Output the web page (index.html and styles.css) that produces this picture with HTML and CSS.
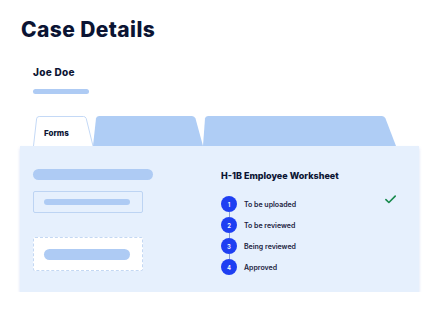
FILE: index.html
```html
<!DOCTYPE html>
<html lang="en">
<head>
<meta charset="utf-8">
<title>Case Details</title>
<link rel="stylesheet" href="styles.css">
</head>
<body>
<div class="page">
  <h1 class="title">Case Details</h1>
  <div class="person">
    <div class="name">Joe Doe</div>
    <div class="skel skel-name"></div>
  </div>
  <div class="tabs">
    <div class="tab tab-forms">
      <svg class="tab-bg" width="60" height="30" viewBox="0 0 60 30"><path d="M0.5 30 L3.6 2.8 Q3.9 0.5 6.2 0.5 L50.5 0.5 Q52.4 0.5 53.2 2.4 L60 30" fill="#ffffff" stroke="#c4d9f6" stroke-width="1"/></svg>
      <span class="tab-label">Forms</span>
    </div>
    <div class="tab tab-2">
      <svg class="tab-bg" width="110" height="30" viewBox="0 0 110 30"><path d="M0 30 L3 2.5 Q3.3 0 6 0 L99 0 Q101.5 0 102.5 2.5 L110 30 Z" fill="#afcdf5"/></svg>
    </div>
    <div class="tab tab-3">
      <svg class="tab-bg" width="193" height="30" viewBox="0 0 193 30"><path d="M0 30 L2 2.5 Q2.3 0 5 0 L179 0 Q181.5 0 182.5 2.5 L193 30 Z" fill="#afcdf5"/></svg>
    </div>
  </div>
  <div class="panel">
    <div class="col-left">
      <div class="skel skel-wide"></div>
      <div class="box box-solid"><div class="skel skel-thin"></div></div>
      <div class="box box-dashed"><div class="skel skel-thick"></div></div>
    </div>
    <div class="col-right">
      <div class="ws-title">H-1B Employee Worksheet</div>
      <div class="steps">
        <div class="step">
          <span class="num">1</span><span class="label">To be uploaded</span>
          <svg class="check" width="11" height="9" viewBox="0 0 11 9"><polyline points="0.9,4.6 3.9,7.5 10.2,1.1" fill="none" stroke="#17894c" stroke-width="1.6" stroke-linecap="round" stroke-linejoin="round"/></svg>
        </div>
        <div class="step"><span class="num">2</span><span class="label">To be reviewed</span></div>
        <div class="step"><span class="num">3</span><span class="label">Being reviewed</span></div>
        <div class="step"><span class="num">4</span><span class="label">Approved</span></div>
      </div>
    </div>
  </div>
</div>
</body>
</html>
```
FILE: styles.css
```css
body {
  margin: 0;
  background: #ffffff;
  font-family: Inter, "Noto Sans", sans-serif;
  color: #0b1433;
}
.page {
  padding: 18px 14px 0 20px;
}
.title {
  margin: 0 0 0 1px;
  font-size: 21px;
  line-height: 24px;
  font-weight: 800;
  letter-spacing: 0.4px;
  color: #0b1433;
}
.person {
  margin-top: 24px;
  padding-left: 13px;
}
.name {
  font-size: 10px;
  line-height: 12px;
  font-weight: 800;
  letter-spacing: 0.3px;
}
.skel {
  background: #aecbf4;
  border-radius: 6px;
}
.skel-name {
  width: 56px;
  height: 5px;
  margin-top: 11px;
}
.tabs {
  display: flex;
  height: 30px;
  margin-top: 22px;
  padding-left: 13px;
}
.tab {
  position: relative;
  height: 30px;
  flex: none;
}
.tab-bg {
  position: absolute;
  left: 0;
  top: 0;
}
.tab-forms { width: 60px; }
.tab-2 { width: 110px; }
.tab-3 { width: 193px; }
.tab-label {
  position: relative;
  display: block;
  padding: 12px 0 0 11px;
  font-size: 8px;
  line-height: 10px;
  font-weight: 800;
  color: #0b1433;
}
.panel {
  display: flex;
  width: 399px;
  height: 146px;
  box-sizing: border-box;
  padding: 23px 0 0 13px;
  background: #e6f0fd;
  box-shadow: 0 2px 3px rgba(110, 145, 225, 0.28);
}
.col-left {
  width: 188px;
  flex: none;
  display: flex;
  flex-direction: column;
}
.skel-wide {
  width: 120px;
  height: 11px;
}
.box {
  width: 110px;
  box-sizing: border-box;
  padding-left: 10px;
  border-radius: 2px;
}
.box-solid {
  height: 22px;
  margin-top: 11px;
  padding-top: 7px;
  border: 1px solid #bdd4f3;
}
.box-dashed {
  height: 34px;
  margin-top: 24px;
  padding-top: 11px;
  border: 1px dashed #c4d8f3;
  background: #ffffff;
}
.skel-thin {
  width: 86px;
  height: 6px;
}
.skel-thick {
  width: 86px;
  height: 11px;
}
.col-right {
  flex: 1;
  padding-right: 23px;
}
.ws-title {
  margin-top: 1px;
  font-size: 9px;
  line-height: 11px;
  font-weight: 800;
  color: #0b1433;
}
.steps {
  margin-top: 15px;
  display: flex;
  flex-direction: column;
  gap: 5px;
}
.step {
  display: flex;
  align-items: center;
  gap: 7px;
  height: 16px;
}
.num {
  position: relative;
  width: 16px;
  height: 16px;
  flex: none;
  border-radius: 50%;
  background: #1e3ff2;
  color: #ffffff;
  font-size: 6px;
  font-weight: 600;
  display: flex;
  align-items: center;
  justify-content: center;
}
.step:not(:last-child) .num::after {
  content: "";
  position: absolute;
  left: 7.5px;
  top: 16px;
  width: 1px;
  height: 5px;
  background: #8c9fcf;
}
.label {
  font-size: 7px;
  font-weight: 600;
  color: #1b2240;
}
.check {
  margin-left: auto;
  align-self: flex-start;
  margin-top: -1px;
}
```
